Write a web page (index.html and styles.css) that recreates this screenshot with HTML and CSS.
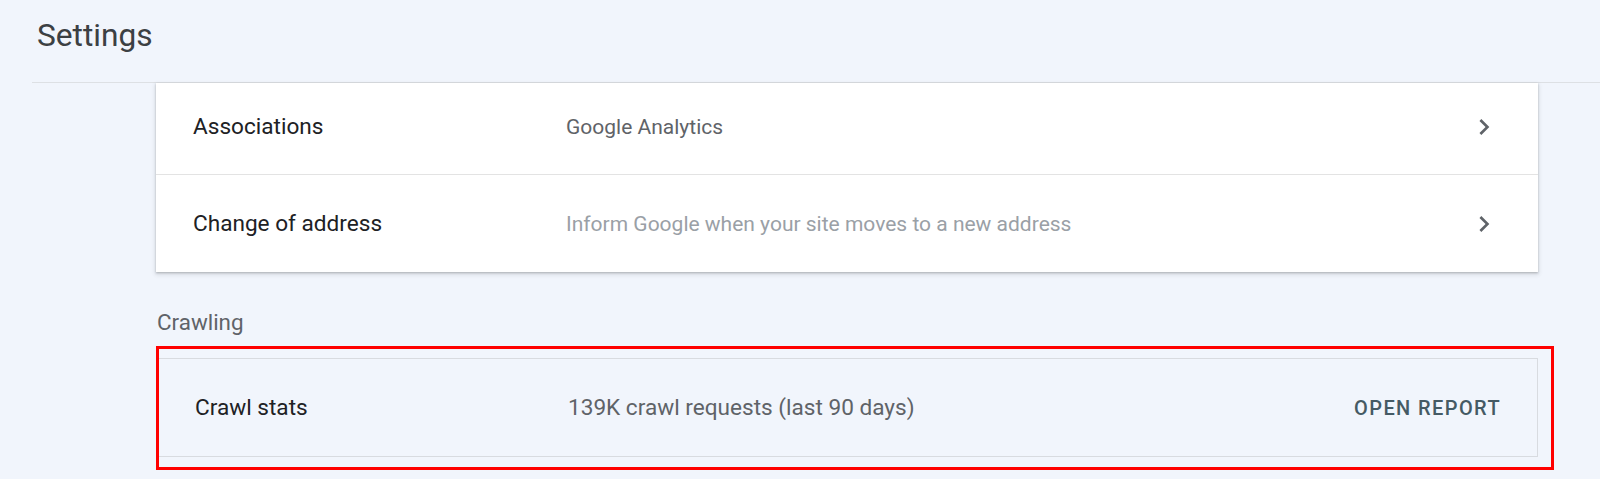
FILE: index.html
```html
<!DOCTYPE html>
<html>
<head>
<meta charset="utf-8">
<link rel="stylesheet" href="styles.css">
</head>
<body>
<header class="topbar">
  <h1 class="title">Settings</h1>
</header>
<main class="content">
  <section class="card">
    <div class="row row-first">
      <span class="label">Associations</span>
      <span class="value">Google Analytics</span>
      <svg class="chev" viewBox="0 0 24 24" width="32" height="32"><path d="M10 6L8.59 7.41 13.17 12l-4.58 4.59L10 18l6-6z"/></svg>
    </div>
    <div class="row row-second">
      <span class="label">Change of address</span>
      <span class="value value-light">Inform Google when your site moves to a new address</span>
      <svg class="chev" viewBox="0 0 24 24" width="32" height="32"><path d="M10 6L8.59 7.41 13.17 12l-4.58 4.59L10 18l6-6z"/></svg>
    </div>
  </section>
  <h2 class="section-title">Crawling</h2>
  <div class="highlight">
    <div class="crawl-row">
      <span class="label">Crawl stats</span>
      <span class="value value-big">139K crawl requests (last 90 days)</span>
      <span class="action">OPEN REPORT</span>
    </div>
  </div>
</main>
</body>
</html>
```

FILE: styles.css
```css
html, body {
  margin: 0;
  padding: 0;
}
body {
  background: #f1f5fc;
  font-family: Roboto, "Liberation Sans", Arial, sans-serif;
  width: 1600px;
  height: 479px;
  overflow: hidden;
}
.topbar {
  margin-left: 32px;
  height: 82px;
  border-bottom: 1px solid #dde0e4;
  box-sizing: content-box;
}
.title {
  margin: 0;
  padding: 18px 0 0 5px;
  font-size: 31.7px;
  line-height: 36px;
  font-weight: 400;
  color: #3c4043;
}
.content {
  padding: 0 62px 0 156px;
}
.card {
  background: #fff;
  box-shadow: 0 1px 2px rgba(60, 64, 67, 0.3), 0 2px 4px 1px rgba(60, 64, 67, 0.12);
}
.row {
  display: grid;
  grid-template-columns: 373px 1fr auto;
  align-items: center;
  padding: 0 38px 0 37px;
  box-sizing: border-box;
}
.row-first {
  height: 92px;
  padding-bottom: 4px;
  border-bottom: 1px solid #e3e3e3;
}
.row-second {
  height: 97px;
}
.label {
  font-size: 22.6px;
  line-height: 28px;
  color: #202124;
}
.value {
  font-size: 21px;
  line-height: 28px;
  color: #5f6368;
}
.value-big {
  font-size: 22.6px;
}
.value-light {
  color: #9aa0a6;
}
.chev {
  display: block;
  fill: #5f6368;
}
.section-title {
  margin: 36px 0 0 1px;
  font-size: 22.4px;
  line-height: 28px;
  font-weight: 400;
  color: #5f6368;
}
.highlight {
  margin: 10px -16px 0 0;
  border: 3px solid #f00;
  padding: 9px 13px 10px 0;
}
.crawl-row {
  display: grid;
  grid-template-columns: 373px 1fr auto;
  align-items: center;
  height: 99px;
  box-sizing: border-box;
  border: 1px solid #d8dbe0;
  border-left: none;
  padding: 0 37px 0 36px;
}
.action {
  font-size: 20px;
  line-height: 28px;
  font-weight: 500;
  letter-spacing: 1.4px;
  color: #455a64;
  margin-right: -1px;
}
```
